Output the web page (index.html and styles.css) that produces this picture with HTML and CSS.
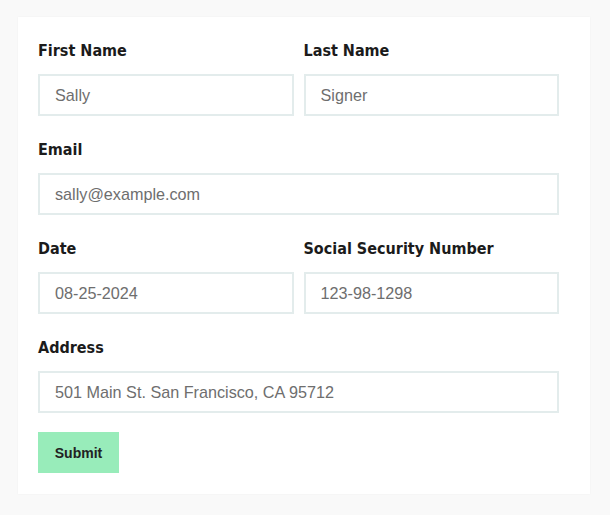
FILE: index.html
```html
<!DOCTYPE html>
<html>
<head>
<meta charset="utf-8">
<link rel="stylesheet" href="styles.css">
</head>
<body>
<form class="card">
  <div class="row two">
    <div class="field">
      <label class="label">First Name</label>
      <input class="input" type="text" value="Sally">
    </div>
    <div class="field">
      <label class="label">Last Name</label>
      <input class="input" type="text" value="Signer">
    </div>
  </div>
  <div class="row">
    <div class="field">
      <label class="label">Email</label>
      <input class="input" type="text" value="sally@example.com">
    </div>
  </div>
  <div class="row two">
    <div class="field">
      <label class="label">Date</label>
      <input class="input" type="text" value="08-25-2024">
    </div>
    <div class="field">
      <label class="label">Social Security Number</label>
      <input class="input" type="text" value="123-98-1298">
    </div>
  </div>
  <div class="row last">
    <div class="field">
      <label class="label">Address</label>
      <input class="input" type="text" value="501 Main St. San Francisco, CA 95712">
    </div>
  </div>
  <button class="submit" type="button">Submit</button>
</form>
</body>
</html>
```
FILE: styles.css
```css
html, body {
  margin: 0;
  padding: 0;
  background: #f9f9f9;
}
body {
  padding: 17px 20px 22px 18px;
}
.card {
  width: 572px;
  box-sizing: border-box;
  background: #ffffff;
  padding: 24px 31px 21px 20px;
  box-shadow: 0 0 2px rgba(0,0,0,0.04);
}
.row {
  display: grid;
  grid-template-columns: 1fr;
  gap: 10px;
  margin-bottom: 24px;
}
.row.two {
  grid-template-columns: 1fr 1fr;
}
.row.last {
  margin-bottom: 19px;
}
.field {
  display: flex;
  flex-direction: column;
  gap: 13px;
}
.label {
  font-family: "DejaVu Sans Condensed", "DejaVu Sans", sans-serif;
  font-stretch: condensed;
  font-weight: bold;
  font-size: 16px;
  line-height: 20px;
  color: #1b1b1b;
}
.input {
  display: block;
  width: 100%;
  box-sizing: border-box;
  height: 42px;
  margin: 0;
  border: 2px solid #e3ecec;
  border-radius: 0;
  padding: 0 15px;
  font-family: "Liberation Sans", Arial, sans-serif;
  font-size: 16.2px;
  color: #6e6e6e;
  background: #fff;
  outline: none;
}
.submit {
  display: block;
  width: 81px;
  height: 41px;
  border: none;
  border-radius: 0;
  background: #98ecba;
  font-family: "Liberation Sans", Arial, sans-serif;
  font-weight: bold;
  font-size: 14px;
  color: #222;
  padding: 0;
  margin: 0;
}
```
